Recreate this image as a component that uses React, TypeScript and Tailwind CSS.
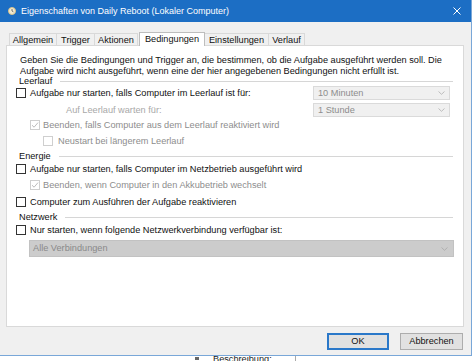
import React from "react";

const font = { fontFamily: '"Liberation Sans", Arial, sans-serif' };

function Check({ disabled, checked, className = "" }: { disabled?: boolean; checked?: boolean; className?: string }) {
  return (
    <div
      className={`w-[10px] h-[10px] border bg-white shrink-0 flex items-center justify-center ${
        disabled ? "border-[#cfcfcf]" : "border-[#333333]"
      } ${className}`}
    >
      {checked && (
        <svg width="8" height="8" viewBox="0 0 8 8">
          <path d="M1 4.2 L3.1 6.2 L7 1.6" fill="none" stroke={disabled ? "#b4b4b4" : "#222"} strokeWidth="0.9" />
        </svg>
      )}
    </div>
  );
}

function Chevron({ color = "#b0b0b0" }: { color?: string }) {
  return (
    <svg width="7" height="4" viewBox="0 0 7 4">
      <path d="M0.5 0.5 L3.5 3.3 L6.5 0.5" fill="none" stroke={color} strokeWidth="0.8" />
    </svg>
  );
}

function Section({ title }: { title: string }) {
  return (
    <div className="flex items-center h-full">
      <span className="text-[#111]">{title}</span>
      <div className="flex-1 h-px bg-[#d6d6d6] ml-[8px] mr-[10px]" />
    </div>
  );
}

export default function App() {
  return (
    <div className="w-[474px] h-[361px] overflow-hidden bg-white flex flex-col text-[9.2px] leading-[11px] text-[#111]" style={font}>
      <div className="flex">
        <div className="w-[472px] h-[356px] bg-[#f0f0f0] border-r border-b border-[#79a7d8] flex flex-col">
          {/* Title bar */}
          <div className="h-[22px] bg-[#1c6ec4] flex items-center text-white shrink-0">
            <div className="ml-[8px] w-[8px] h-[8px] rounded-full bg-[#f3ead0] border border-[#d8c38a] relative">
              <svg width="6" height="6" viewBox="0 0 6 6" className="absolute left-0 top-0">
                <path d="M3 1 L3 3 L4.4 3.8" fill="none" stroke="#555" strokeWidth="0.8" />
              </svg>
            </div>
            <span className="ml-[5px] text-[9px]">Eigenschaften von Daily Reboot (Lokaler Computer)</span>
            <div className="flex-1" />
            <svg width="8" height="8" viewBox="0 0 8 8" className="mr-[10px]">
              <path d="M0.5 0.5 L7.5 7.5 M7.5 0.5 L0.5 7.5" stroke="white" strokeWidth="1" />
            </svg>
          </div>

          {/* Tabs */}
          <div className="flex items-end h-[14px] mt-[10px] pl-[9px] shrink-0 relative z-10">
            <div className="w-[48px] h-[13px] border border-b-0 border-[#d9d9d9] flex items-center justify-center">Allgemein</div>
            <div className="w-[38px] h-[13px] border border-b-0 border-l-0 border-[#d9d9d9] flex items-center justify-center">Trigger</div>
            <div className="w-[43px] h-[13px] border border-b-0 border-l-0 border-[#d9d9d9] flex items-center justify-center">Aktionen</div>
            <div className="ml-[1px] w-[66px] h-[14px] bg-white border border-b-0 border-[#bdbdbd] flex items-start justify-center pt-[1px]">Bedingungen</div>
            <div className="w-[64px] h-[13px] border border-b-0 border-l-0 border-[#d9d9d9] flex items-center justify-center">Einstellungen</div>
            <div className="w-[36px] h-[13px] border border-b-0 border-l-0 border-[#d9d9d9] flex items-center justify-center">Verlauf</div>
          </div>

          {/* Panel */}
          <div className="ml-[6px] mr-[7px] -mt-[1px] h-[282px] bg-white border border-[#d9d9d9] shrink-0 flex flex-col pl-[11px] pt-[9px]">
            <div className="pl-[2px] leading-[11px]">
              <div>Geben Sie die Bedingungen und Trigger an, die bestimmen, ob die Aufgabe ausgeführt werden soll. Die</div>
              <div>Aufgabe wird nicht ausgeführt, wenn eine der hier angegebenen Bedingungen nicht erfüllt ist.</div>
            </div>
            <div className="h-[9px] pl-[1px]">
              <Section title="Leerlauf" />
            </div>
            <div className="h-[14px] flex items-center">
              <Check className="-ml-[2px]" />
              <span className="ml-[4px]">Aufgabe nur starten, falls Computer im Leerlauf ist für:</span>
              <div className="flex-1" />
              <div className="w-[137px] h-[14px] mr-[13px] bg-[#f0f0f0] border border-[#dadada] flex items-center pl-[4px] pr-[4px] text-[#8d8d8d]">
                <span className="flex-1">10 Minuten</span>
                <Chevron />
              </div>
            </div>
            <div className="h-[14px] mt-[3px] flex items-center">
              <span className="ml-[48px] text-[#a8a8a8]">Auf Leerlauf warten für:</span>
              <div className="flex-1" />
              <div className="w-[137px] h-[14px] mr-[13px] bg-[#f0f0f0] border border-[#dadada] flex items-center pl-[4px] pr-[4px] text-[#8d8d8d]">
                <span className="flex-1">1 Stunde</span>
                <Chevron />
              </div>
            </div>
            <div className="h-[16px] flex items-center text-[#8d8d8d]">
              <Check disabled checked className="ml-[12px]" />
              <span className="ml-[3px]">Beenden, falls Computer aus dem Leerlauf reaktiviert wird</span>
            </div>
            <div className="h-[16px] flex items-center text-[#8d8d8d]">
              <Check disabled className="ml-[25px]" />
              <span className="ml-[5px]">Neustart bei längerem Leerlauf</span>
            </div>
            <div className="h-[14px] pl-[1px]">
              <Section title="Energie" />
            </div>
            <div className="h-[12px] flex items-center">
              <Check className="-ml-[2px]" />
              <span className="ml-[4px]">Aufgabe nur starten, falls Computer im Netzbetrieb ausgeführt wird</span>
            </div>
            <div className="h-[20px] flex items-center text-[#8d8d8d]">
              <Check disabled checked className="ml-[12px]" />
              <span className="ml-[3px]">Beenden, wenn Computer in den Akkubetrieb wechselt</span>
            </div>
            <div className="h-[14px] flex items-center">
              <Check className="-ml-[2px]" />
              <span className="ml-[4px]">Computer zum Ausführen der Aufgabe reaktivieren</span>
            </div>
            <div className="h-[16px] pl-[1px]">
              <Section title="Netzwerk" />
            </div>
            <div className="h-[10px] flex items-center">
              <Check className="-ml-[2px]" />
              <span className="ml-[4px]">Nur starten, wenn folgende Netzwerkverbindung verfügbar ist:</span>
            </div>
            <div className="mt-[5px] ml-[11px] mr-[9px] h-[17px] bg-[#cccccc] border border-[#c2c2c2] flex items-center pl-[3px] pr-[5px] text-[#8a8a8a]">
              <span className="flex-1">Alle Verbindungen</span>
              <Chevron color="#a8a8a8" />
            </div>
          </div>

          {/* Buttons */}
          <div className="flex justify-end mt-[6px] mr-[8px] gap-[11px]">
            <div className="w-[62px] h-[17px] bg-[#e1e1e1] border-2 border-[#2a78c9] flex items-center justify-center">OK</div>
            <div className="w-[63px] h-[17px] bg-[#e1e1e1] border border-[#adadad] flex items-center justify-center">Abbrechen</div>
          </div>
        </div>
        <div className="w-[2px] h-[356px] bg-white" />
      </div>
      <div className="h-[5px] overflow-hidden flex bg-white">
        <div className="ml-[195px] w-[4px] h-[3px] mt-[1px] bg-[#666]" />
        <div className="ml-[14px] leading-[9px] -mt-[1px] text-[#222]">Beschreibung:</div>
        <div className="ml-[23px] w-px h-[5px] bg-[#aaa]" />
      </div>
    </div>
  );
}
